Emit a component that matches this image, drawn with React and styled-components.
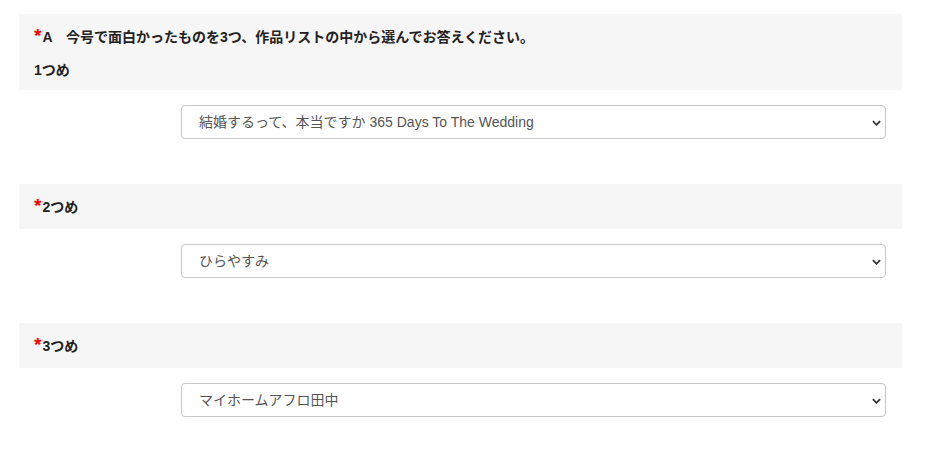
import React, { useState } from 'react';
import styled, { createGlobalStyle } from 'styled-components';

const GlobalStyle = createGlobalStyle`
  body {
    margin: 0;
    background: #fff;
    font-family: "Liberation Sans", Arial, "Noto Sans CJK JP", sans-serif;
    color: #333;
  }
`;

const questions = [
  {
    id: 'q1',
    title: 'A\u3000今号で面白かったものを3つ、作品リストの中から選んでお答えください。',
    sub: '1つめ',
    value: '結婚するって、本当ですか 365 Days To The Wedding',
  },
  { id: 'q2', title: '2つめ', value: 'ひらやすみ' },
  { id: 'q3', title: '3つめ', value: 'マイホームアフロ田中' },
];

const options = [
  '結婚するって、本当ですか 365 Days To The Wedding',
  'ひらやすみ',
  'マイホームアフロ田中',
];

function Question({ q }) {
  const [value, setValue] = useState(q.value);
  return (
    <Block>
      <Head $multi={!!q.sub}>
        <Title>
          <Required>*</Required>
          {q.title}
        </Title>
        {q.sub && <Sub>{q.sub}</Sub>}
      </Head>
      <Field>
        <SelectWrap>
          <Select value={value} onChange={e => setValue(e.target.value)}>
            {options.map(o => (
              <option key={o} value={o}>{o}</option>
            ))}
          </Select>
          <Chevron viewBox="0 0 10 6">
            <path d="M1 1l4 4 4-4" />
          </Chevron>
        </SelectWrap>
      </Field>
    </Block>
  );
}

export default function App() {
  return (
    <>
      <GlobalStyle />
      <Page>
        {questions.map(q => (
          <Question key={q.id} q={q} />
        ))}
      </Page>
    </>
  );
}

const Page = styled.div`
  padding: 14px 23px 0 19px;
`;

const Block = styled.div``;

const Head = styled.div`
  background: #f6f6f6;
  padding: 13px 15px ${p => (p.$multi ? '10px' : '12px')};
  display: flex;
  flex-direction: column;
  gap: 13px;
`;

const Title = styled.div`
  font-size: 14px;
  line-height: 20px;
  font-weight: bold;
  color: #222;
`;

const Sub = styled(Title)``;

const Required = styled.span`
  color: #f00;
  font-size: 19px;
  line-height: 1;
  display: inline-block;
  vertical-align: top;
  margin-top: -1px;
  margin-right: 1px;
  font-weight: bold;
`;

const Field = styled.div`
  padding: 15px 16px 45px 162px;
`;

const SelectWrap = styled.div`
  position: relative;
`;

const Select = styled.select`
  appearance: none;
  -webkit-appearance: none;
  width: 100%;
  height: 34px;
  box-sizing: border-box;
  border: 1px solid #c8c8c8;
  border-radius: 4px;
  background: #fff;
  padding: 0 30px 0 17px;
  font-family: "Liberation Sans", Arial, "Noto Sans CJK JP", sans-serif;
  font-size: 14px;
  color: #555;
  outline: none;
`;

const Chevron = styled.svg`
  position: absolute;
  right: 5px;
  top: 15px;
  width: 9px;
  height: 6px;
  fill: none;
  stroke: #333;
  stroke-width: 2;
  pointer-events: none;
`;
